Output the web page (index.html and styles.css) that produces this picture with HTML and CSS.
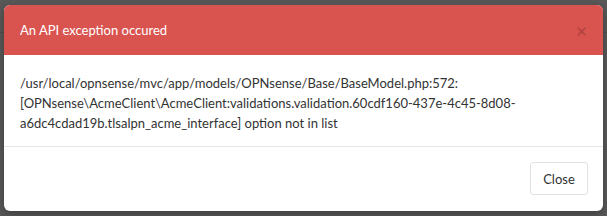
FILE: index.html
```html
<!DOCTYPE html>
<html lang="en">
<head>
    <meta charset="UTF-8">
    <title>API exception</title>
    <link rel="stylesheet" href="styles.css">
</head>
<body>

<div class="backdrop">
    <div class="page-line"></div>
</div>

<div class="modal">
    <div class="modal-header">
        <h4 class="modal-title">An API exception occured</h4>
        <span class="close">&times;</span>
    </div>
    <div class="modal-body">
        /usr/local/opnsense/mvc/app/models/OPNsense/Base/BaseModel.php:572:<br>
        [OPNsense\AcmeClient\AcmeClient:validations.validation.60cdf160-437e-4c45-8d08-<br>
        a6dc4cdad19b.tlsalpn_acme_interface] option not in list
    </div>
    <div class="modal-footer">
        <button class="btn">Close</button>
    </div>
</div>

</body>
</html>
```

FILE: styles.css
```css
* {
    margin: 0;
    padding: 0;
    box-sizing: border-box;
}

body {
    font-family: 'Lato', sans-serif;
    font-size: 13px;
    background-color: #585858;
    padding: 5px 4px;
    height: 216px;
    overflow: hidden;
}

.backdrop {
    position: absolute;
    left: 0;
    top: 0;
    width: 100%;
    height: 100%;
}

.page-line {
    margin-top: 32px;
    border-top: 1px solid #4e4e4e;
}

.modal {
    position: relative;
    background-color: #fff;
    border-radius: 6px;
    overflow: hidden;
    box-shadow: 0 3px 9px rgba(0, 0, 0, 0.3);
}

.modal-header {
    background-color: #d9534f;
    height: 50px;
    padding: 0 16px;
    display: flex;
    align-items: center;
    justify-content: space-between;
}

.modal-title {
    color: #fff;
    font-size: 13px;
    font-weight: normal;
}

.close {
    color: #000;
    opacity: 0.2;
    font-size: 19px;
    line-height: 1;
    margin-right: 0;
}

.modal-body {
    color: #333;
    line-height: 20px;
    padding: 18px 16px 13px;
    border-bottom: 1px solid #e5e5e5;
}

.modal-footer {
    display: flex;
    justify-content: flex-end;
    padding: 15px 15px 16px;
}

.btn {
    font-family: inherit;
    font-size: 13px;
    color: #333;
    background-color: #fff;
    border: 1px solid #e2e2e2;
    border-radius: 3px;
    width: 58px;
    height: 33px;
}
```
